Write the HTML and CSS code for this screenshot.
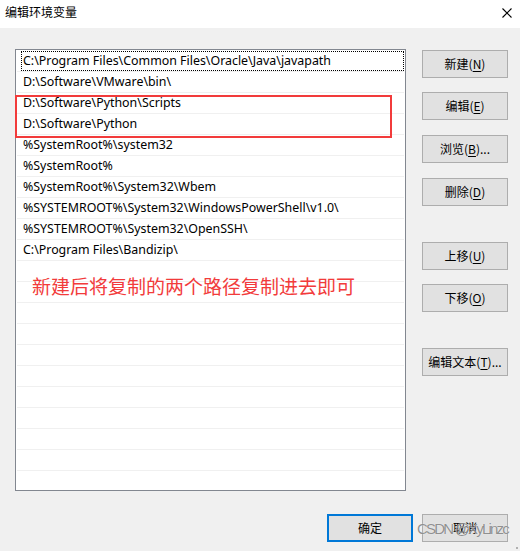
FILE: index.html
```html
<!DOCTYPE html>
<html>
<head>
<meta charset="utf-8">
<link rel="stylesheet" href="styles.css">
</head>
<body>
<div class="window">
  <div class="titlebar">
    <span class="title">编辑环境变量</span>
    <svg class="close" width="10" height="10" viewBox="0 0 10 10"><path d="M0.5 0.5 L9.5 9.5 M9.5 0.5 L0.5 9.5" stroke="#000" stroke-width="1.1" fill="none"/></svg>
  </div>
  <div class="content">
    <div class="list-wrap">
      <div class="list">
        <div class="row first"><span class="focus">C:\Program Files\Common Files\Oracle\Java\javapath</span></div>
        <div class="row"><span class="cell">D:\Software\VMware\bin\</span></div>
        <div class="row"><span class="cell">D:\Software\Python\Scripts</span></div>
        <div class="row"><span class="cell">D:\Software\Python</span></div>
        <div class="row"><span class="cell">%SystemRoot%\system32</span></div>
        <div class="row"><span class="cell">%SystemRoot%</span></div>
        <div class="row"><span class="cell">%SystemRoot%\System32\Wbem</span></div>
        <div class="row"><span class="cell">%SYSTEMROOT%\System32\WindowsPowerShell\v1.0\</span></div>
        <div class="row"><span class="cell">%SYSTEMROOT%\System32\OpenSSH\</span></div>
        <div class="row"><span class="cell">C:\Program Files\Bandizip\</span></div>
        <div class="row"></div>
        <div class="row"></div>
        <div class="row"></div>
        <div class="row"></div>
        <div class="row"></div>
        <div class="row"></div>
        <div class="row"></div>
        <div class="row"></div>
        <div class="row"></div>
        <div class="row"></div>
        <div class="row"></div>
      </div>
      <div class="highlight"></div>
      <div class="note">新建后将复制的两个路径复制进去即可</div>
    </div>
    <div class="buttons">
      <div class="btn">新建(<u>N</u>)</div>
      <div class="btn g14">编辑(<u>E</u>)</div>
      <div class="btn">浏览(<u>B</u>)...</div>
      <div class="btn">删除(<u>D</u>)</div>
      <div class="btn g36">上移(<u>U</u>)</div>
      <div class="btn g14">下移(<u>O</u>)</div>
      <div class="btn g36">编辑文本(<u>T</u>)...</div>
    </div>
  </div>
  <div class="footer">
    <div class="btn ok">确定</div>
    <div class="btn cancel">取消<span class="watermark">CSDN @XyLinzc</span></div>
  </div>
  <div class="grip"></div>
</div>
</body>
</html>
```
FILE: styles.css
```css
html, body {
  margin: 0;
  padding: 0;
}
body {
  background: #f0f0f0;
  width: 520px;
  height: 551px;
  overflow: hidden;
  font-family: "Noto Sans", "Noto Sans CJK SC", sans-serif;
  font-size: 12px;
  color: #000;
}
.window {
  width: 520px;
  height: 551px;
  position: relative;
}
.titlebar {
  height: 28px;
  background: #fff;
  display: flex;
  justify-content: space-between;
  align-items: flex-start;
  box-sizing: border-box;
  padding: 4px 8px 0 5px;
}
.title {
  font-family: "Noto Sans CJK SC", sans-serif;
  font-size: 12px;
  line-height: 16px;
}
.close {
  margin-top: 4px;
}
.content {
  display: flex;
  padding: 21px 0 0 15px;
}
.list-wrap {
  position: relative;
  width: 391px;
  height: 442px;
}
.list {
  box-sizing: border-box;
  width: 391px;
  height: 442px;
  border: 1px solid #828790;
  background: #fff;
  padding: 1px 1px 0 1px;
  overflow: hidden;
}
.row {
  height: 20px;
  border-bottom: 1px solid #f0f0f0;
  line-height: 20px;
  font-size: 12.4px;
  white-space: nowrap;
  display: flex;
}
.cell {
  padding-left: 6px;
}
.focus {
  flex: 1;
  margin-left: 4px;
  height: 18px;
  line-height: 18px;
  border: 1px dotted #000;
  padding-left: 1px;
}
.highlight {
  position: absolute;
  left: 0;
  top: 46px;
  width: 377px;
  height: 43px;
  box-sizing: border-box;
  border: 2px solid #f23b3b;
}
.note {
  position: absolute;
  left: 17px;
  top: 227px;
  font-family: "Noto Sans CJK SC", sans-serif;
  font-size: 19px;
  line-height: 19px;
  color: #f23b3b;
  white-space: nowrap;
}
.buttons {
  display: flex;
  flex-direction: column;
  margin-left: 16px;
  padding-top: 1px;
}
.btn {
  box-sizing: border-box;
  width: 86px;
  height: 28px;
  background: #e1e1e1;
  border: 1px solid #adadad;
  font-family: "Noto Sans CJK SC", sans-serif;
  font-size: 12px;
  line-height: 26px;
  text-align: center;
  white-space: nowrap;
}
.btn u {
  text-decoration: underline;
  text-underline-offset: 2px;
}
.buttons .btn + .btn {
  margin-top: 15px;
}
.buttons .btn.g14 {
  margin-top: 14px;
}
.buttons .btn.g36 {
  margin-top: 36px;
}
.footer {
  display: flex;
  justify-content: flex-end;
  gap: 9px;
  padding: 23px 12px 0 0;
}
.ok {
  border: 2px solid #0078d7;
  line-height: 24px;
}
.cancel {
  position: relative;
}
.watermark {
  position: absolute;
  left: -6px;
  top: 6px;
  font-family: "Liberation Sans", sans-serif;
  font-size: 15px;
  line-height: 16px;
  letter-spacing: -1.8px;
  color: rgba(110, 110, 110, 0.75);
  text-shadow: 0 0 1px rgba(255,255,255,0.9);
  white-space: nowrap;
}
.grip {
  position: absolute;
  right: 2px;
  bottom: 2px;
  width: 2px;
  height: 2px;
  background: #b0b0b0;
}
```
